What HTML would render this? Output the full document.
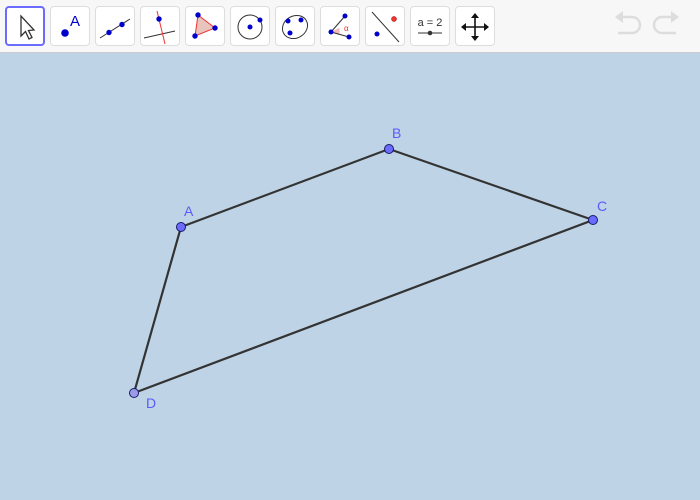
<!DOCTYPE html>
<html><head><style>
body{margin:0;width:700px;height:500px;overflow:hidden;font-family:"Liberation Sans",sans-serif;background:#bed4e6}
#tb{position:absolute;left:0;top:0;width:700px;height:52px;background:#f7f7f7;border-bottom:1px solid #c8ccd0}
.b{position:absolute;top:6px;width:38px;height:38px;border:1px solid #ddd;border-radius:4px;background:#fff}
.b svg{position:absolute;left:0;top:0}
.sel{border:2px solid #6b6bff;width:36px;height:36px}
</style></head><body>
<div id="tb">
<div class="b sel" style="left:5px"><svg width="36" height="36"><path d="M14 8 L14 28 L18.5 23.5 L22 31 L25 29.5 L21.5 22.5 L27 22 Z" fill="#fff" stroke="#333" stroke-width="1.3"/></svg></div>
<div class="b" style="left:50px"><svg width="38" height="38"><circle cx="14" cy="26" r="3.8" fill="#00c"/><text x="19" y="19" font-size="15" fill="#00c" font-family="Liberation Sans">A</text></svg></div>
<div class="b" style="left:95px"><svg width="38" height="38"><line x1="4" y1="31" x2="34" y2="12" stroke="#333" stroke-width="1"/><circle cx="13" cy="25.5" r="2.7" fill="#00c"/><circle cx="26" cy="17.5" r="2.7" fill="#00c"/></svg></div>
<div class="b" style="left:140px"><svg width="38" height="38"><line x1="3" y1="31" x2="34" y2="24" stroke="#333" stroke-width="1"/><line x1="16" y1="4" x2="24" y2="37" stroke="#e33" stroke-width="1"/><circle cx="18" cy="12" r="2.7" fill="#00c"/></svg></div>
<div class="b" style="left:185px"><svg width="38" height="38"><polygon points="12,8 29,21 9,29" fill="#e8c4bc" stroke="#e33" stroke-width="1"/><circle cx="12" cy="8" r="2.7" fill="#00c"/><circle cx="29" cy="21" r="2.7" fill="#00c"/><circle cx="9" cy="29" r="2.7" fill="#00c"/></svg></div>
<div class="b" style="left:230px"><svg width="38" height="38"><circle cx="19" cy="20" r="12" fill="none" stroke="#333" stroke-width="1"/><circle cx="19" cy="20" r="2.5" fill="#00c"/><circle cx="29" cy="13" r="2.5" fill="#00c"/></svg></div>
<div class="b" style="left:275px"><svg width="38" height="38"><ellipse cx="19" cy="20" rx="13" ry="11" transform="rotate(-30 19 20)" fill="none" stroke="#333" stroke-width="1"/><circle cx="12" cy="14" r="2.5" fill="#00c"/><circle cx="25" cy="13" r="2.5" fill="#00c"/><circle cx="14" cy="26" r="2.5" fill="#00c"/></svg></div>
<div class="b" style="left:320px"><svg width="38" height="38"><path d="M10 25 L18 21 A9 9 0 0 1 18 28 Z" fill="#f3b8b8"/><line x1="10" y1="25" x2="24" y2="9" stroke="#333"/><line x1="10" y1="25" x2="28" y2="30" stroke="#333"/><circle cx="10" cy="25" r="2.5" fill="#00c"/><circle cx="24" cy="9" r="2.5" fill="#00c"/><circle cx="28" cy="30" r="2.5" fill="#00c"/><text x="23" y="24" font-size="8" fill="#e33">α</text></svg></div>
<div class="b" style="left:365px"><svg width="38" height="38"><line x1="6" y1="5" x2="33" y2="35" stroke="#333"/><circle cx="28" cy="12" r="2.5" fill="#e33" stroke="#900" stroke-width=".5"/><circle cx="11" cy="27" r="2.5" fill="#00c"/></svg></div>
<div class="b" style="left:410px"><svg width="38" height="38"><text x="19" y="19" font-size="11" text-anchor="middle" fill="#333">a = 2</text><line x1="7" y1="26" x2="31" y2="26" stroke="#333"/><circle cx="19" cy="26" r="2.3" fill="#333"/></svg></div>
<div class="b" style="left:455px"><svg width="38" height="38"><path d="M19 7 V33 M6 20 H32" stroke="#111" stroke-width="1.6"/><path d="M19 6 L15 11 H23Z M19 34 L15 29 H23Z M5 20 L10 16 V24Z M33 20 L28 16 V24Z" fill="#111"/></svg></div>
<svg width="80" height="40" style="position:absolute;left:610px;top:8px"><path d="M10 9 H22 A8 8 0 0 1 22 25 H8" fill="none" stroke="#ddd" stroke-width="2.5"/><path d="M5 9 L13 3 V15Z" fill="#ddd"/><path d="M64 9 H52 A8 8 0 0 0 52 25 H66" fill="none" stroke="#ddd" stroke-width="2.5"/><path d="M69 9 L61 3 V15Z" fill="#ddd"/></svg>
</div>
<svg width="700" height="447" style="position:absolute;left:0;top:53px">
<g transform="translate(0,-53)" stroke="#333" stroke-width="2.2" fill="none">
<polygon points="181,227 389,149 593,220 134,393"/>
</g>
<g transform="translate(0,-53)" fill="#6b6bff" stroke="#1a1a66" stroke-width="1">
<circle cx="181" cy="227" r="4.5"/><circle cx="389" cy="149" r="4.5"/><circle cx="593" cy="220" r="4.5"/><circle cx="134" cy="393" r="4.5" fill="#9a9ae8"/>
</g>
<g transform="translate(0,-53)" fill="#5a5aff" font-size="14" font-family="Liberation Sans">
<text x="184" y="216">A</text><text x="392" y="138">B</text><text x="597" y="211">C</text><text x="146" y="408">D</text>
</g>
</svg>
</body></html>
